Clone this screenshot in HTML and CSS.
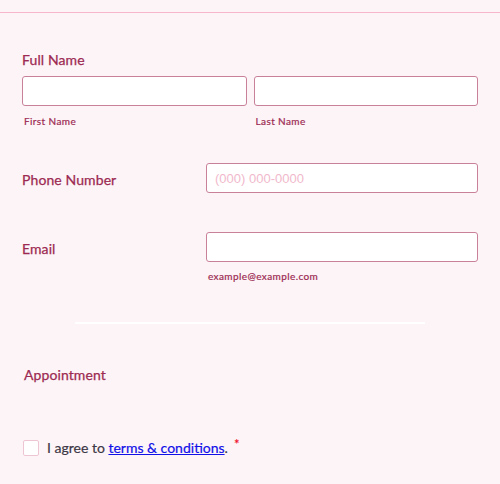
FILE: index.html
```html
<!DOCTYPE html>
<html lang="en">
<head>
  <meta charset="UTF-8">
  <meta name="viewport" content="width=device-width, initial-scale=1.0">
  <title>Appointment Form</title>
  <link rel="stylesheet" href="styles.css">
</head>
<body>
  <div class="top-line"></div>

  <form class="form">
    <!-- full name -->
    <div class="field field-stacked">
      <label class="label">Full Name</label>
      <div class="name-row">
        <div class="name-col">
          <input type="text" class="input">
          <span class="sublabel">First Name</span>
        </div>
        <div class="name-col">
          <input type="text" class="input">
          <span class="sublabel">Last Name</span>
        </div>
      </div>
    </div>

    <!-- phone -->
    <div class="field field-inline phone">
      <label class="label">Phone Number</label>
      <div class="control">
        <input type="text" class="input" placeholder="(000) 000-0000">
      </div>
    </div>

    <!-- email -->
    <div class="field field-inline email">
      <label class="label">Email</label>
      <div class="control">
        <input type="text" class="input">
        <span class="sublabel sublabel-email">example@example.com</span>
      </div>
    </div>

    <hr class="divider">

    <div class="section-title">Appointment</div>

    <!-- terms -->
    <div class="agree">
      <span class="checkbox"></span>
      <span class="agree-text">I agree to <a href="#">terms &amp; conditions</a>.</span>
      <span class="required">*</span>
    </div>
  </form>
</body>
</html>
```

FILE: styles.css
```css
/* page base */
body {
  margin: 0;
  background: #fdf4f7;
  font-family: Lato, 'Noto Sans', sans-serif;
  color: #9c2a52;
  overflow: hidden;
}

.top-line {
  height: 1px;
  margin-top: 12px;
  background: #f7b6ca;
}

.form {
  padding: 0 22px;
}

.label {
  font-size: 14px;
  font-weight: 400;
  letter-spacing: 0.1px;
  color: #9c2a52;
  -webkit-text-stroke: 0.25px #9c2a52;
}

/* text boxes */
.input {
  display: block;
  box-sizing: border-box;
  width: 100%;
  height: 30px;
  margin: 0;
  padding: 0 8px;
  border: 1px solid #c98199;
  border-radius: 3px;
  background: #fff;
  font-family: 'Liberation Sans', Arial, sans-serif;
  font-size: 13px;
  outline: none;
}
.input::placeholder {
  color: #f1b9cc;
}

.sublabel {
  display: block;
  font-size: 10px;
  font-weight: 400;
  letter-spacing: 0.4px;
  line-height: 12px;
  color: #9c2a52;
  -webkit-text-stroke: 0.2px #9c2a52;
  margin-top: 9px;
  padding-left: 2px;
}

/* full name block */
.field-stacked {
  padding-top: 37px;
}
.field-stacked .label {
  display: block;
  line-height: 20px;
  margin-bottom: 6px;
}
.name-row {
  display: flex;
  gap: 7px;
}
.name-col {
  flex: 1;
}

/* label left, box right */
.field-inline {
  display: flex;
  align-items: flex-start;
}
.field-inline .label {
  width: 184px;
  flex-shrink: 0;
  line-height: 20px;
  padding-top: 7px;
}
.field-inline .control {
  flex: 1;
}
.phone {
  margin-top: 36px;
}
.email {
  margin-top: 39px;
}
.sublabel-email {
  margin-top: 8px;
}

.divider {
  border: 0;
  height: 2px;
  background: #fff;
  margin: 40px 53px 0;
}

.section-title {
  font-size: 14px;
  font-weight: 400;
  letter-spacing: 0.1px;
  -webkit-text-stroke: 0.25px #9c2a52;
  line-height: 20px;
  margin-top: 41px;
  padding-left: 2px;
}

/* terms checkbox */
.agree {
  display: flex;
  align-items: center;
  margin-top: 54px;
  padding-left: 1px;
}
.checkbox {
  width: 14px;
  height: 14px;
  border: 1px solid #edc5d3;
  border-radius: 2px;
  background: #fff;
  margin-right: 8px;
}
.agree-text {
  font-size: 14px;
  font-weight: 400;
  letter-spacing: 0;
  color: #3c3846;
  -webkit-text-stroke: 0.2px #3c3846;
}
.agree-text a {
  color: #1010e8;
  -webkit-text-stroke: 0.2px #1010e8;
}
.required {
  color: #f0132f;
  font-size: 13px;
  font-weight: 700;
  margin-left: 6px;
  position: relative;
  top: -4px;
}
```
